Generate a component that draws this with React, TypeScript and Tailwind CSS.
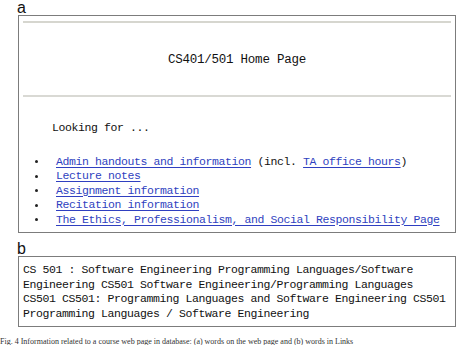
const mono = { fontFamily: '"Liberation Mono", "DejaVu Sans Mono", monospace' }

const links = [
  { text: "Admin handouts and information", extra: true },
  { text: "Lecture notes" },
  { text: "Assignment information" },
  { text: "Recitation information" },
  { text: "The Ethics, Professionalism, and Social Responsibility Page" },
]

const summary = [
  "CS 501 : Software Engineering Programming Languages/Software",
  "Engineering CS501 Software Engineering/Programming Languages",
  "CS501 CS501: Programming Languages and Software Engineering CS501",
  "Programming Languages / Software Engineering",
]

const Link = ({ children }: { children: React.ReactNode }) => (
  <span className="text-[#2f3fc0] underline underline-offset-[2px]">{children}</span>
)

export default function App() {
  return (
    <div className="w-[474px] h-[345px] overflow-hidden bg-white text-[#111]">
      {/* label a */}
      <div className="h-[15px] pl-[17px] text-[16px] leading-[15px] font-['Liberation_Sans',Arial,sans-serif]">
        a
      </div>

      {/* web page panel */}
      <div className="ml-[18px] w-[438px] h-[218px] border border-[#7c7c7c] px-[4px] pt-[5px]" style={mono}>
        <div className="h-[2px] bg-[#d6d6cf]" />
        <div className="mt-[29px] h-[16px] leading-[16px] text-center text-[12.5px] tracking-[-0.25px]">
          CS401/501 Home Page
        </div>
        <div className="mt-[27px] h-[2px] bg-[#d9d9d4]" />

        <div className="text-[11.5px] tracking-[-0.4px] leading-[14.5px]">
          <div className="mt-[24px] pl-[29px]">Looking for ...</div>
          <ul className="mt-[19px]">
            {links.map((l) => (
              <li key={l.text} className="flex items-center h-[14.5px]">
                <span className="ml-[12px] w-[3px] h-[3px] rounded-full bg-[#222]" />
                <span className="ml-[18px] whitespace-pre">
                  <Link>{l.text}</Link>
                  {l.extra && (
                    <>
                      {" (incl. "}
                      <Link>TA office hours</Link>)
                    </>
                  )}
                </span>
              </li>
            ))}
          </ul>
        </div>
      </div>

      {/* label b */}
      <div className="mt-[8px] h-[15px] pl-[17px] text-[16px] leading-[15px] font-['Liberation_Sans',Arial,sans-serif]">
        b
      </div>

      {/* link words panel */}
      <div
        className="ml-[18px] w-[438px] border border-[#7c7c7c] pl-[4px] pt-[6px] pb-[5px] text-[11.5px] tracking-[-0.4px] leading-[14.5px]"
        style={mono}
      >
        {summary.map((line) => (
          <div key={line} className="whitespace-pre">
            {line}
          </div>
        ))}
      </div>

      {/* caption, cut off by the crop */}
      <div className="mt-[10px] whitespace-nowrap text-[8px] leading-[10px] text-[#333] font-['Liberation_Serif',serif]">
        Fig. 4  Information related to a course web page in database: (a) words on the web page and (b) words in Links
      </div>
    </div>
  )
}
